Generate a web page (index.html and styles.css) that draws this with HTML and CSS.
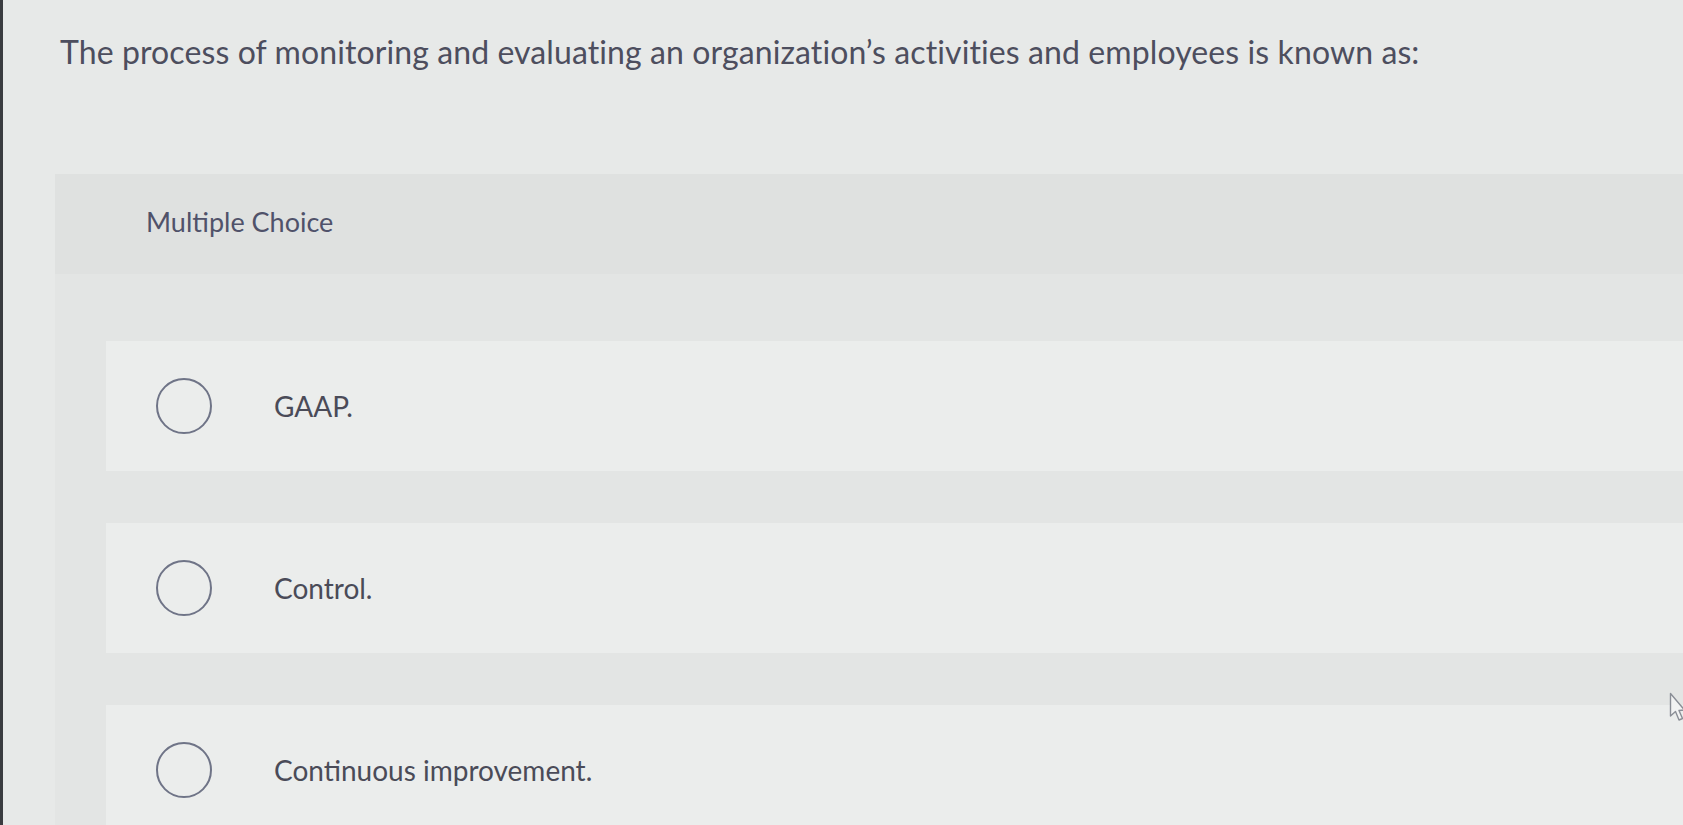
FILE: index.html
```html
<!DOCTYPE html>
<html lang="en">
<head>
<meta charset="utf-8">
<title>Multiple Choice</title>
<link rel="stylesheet" href="styles.css">
</head>
<body>
<div class="page">
  <h1 class="question">The process of monitoring and evaluating an organization’s activities and employees is known as:</h1>
  <section class="panel">
    <div class="panel-head">Multiple Choice</div>
    <div class="options">
      <label class="option"><span class="radio"></span><span class="opt-text">GAAP.</span></label>
      <label class="option"><span class="radio"></span><span class="opt-text">Control.</span></label>
      <label class="option"><span class="radio"></span><span class="opt-text">Continuous improvement.</span></label>
    </div>
  </section>
</div>
<svg class="cursor" width="16" height="30" viewBox="0 0 16 30"><path d="M1.5 1.5 L1.5 24 L6.5 19.5 L10 28 L13.5 26.5 L10 18.5 L15.5 18 Z" fill="#f2f3f3" stroke="#8a8e96" stroke-width="1.4" stroke-linejoin="round"/></svg>
</body>
</html>
```
FILE: styles.css
```css
html, body {
  margin: 0;
  padding: 0;
  height: 100%;
}
body {
  background: #e7e9e8;
  font-family: Lato, "Open Sans", Arial, sans-serif;
  color: #4a4b58;
  overflow: hidden;
  border-left: 3px solid #3a3c40;
  box-sizing: border-box;
}
.page {
  padding: 32px 0 0 57px;
}
.question {
  margin: 0;
  font-size: 32px;
  font-weight: 400;
  line-height: 40px;
  letter-spacing: 0.1px;
  color: #4d4e5e;
}
.panel {
  margin-top: 102px;
  margin-left: -5px;
  background: #e1e3e2;
}
.panel-head {
  height: 100px;
  box-sizing: border-box;
  padding: 30px 0 0 91px;
  font-size: 27px;
  line-height: 36px;
  background: #dfe1e0;
  color: #50526a;
}
.options {
  padding: 67px 0 0 51px;
  display: flex;
  flex-direction: column;
  gap: 52px;
  background: #e3e5e4;
}
.option {
  height: 130px;
  display: flex;
  align-items: center;
  padding-left: 50px;
  background: #ebedec;
}
.radio {
  width: 52px;
  height: 52px;
  border: 2.5px solid #6f7487;
  border-radius: 50%;
  flex: none;
}
.opt-text {
  margin-left: 62px;
  font-size: 28px;
  color: #4a4b58;
}
.cursor {
  position: absolute;
  left: 1669px;
  top: 692px;
}
```
